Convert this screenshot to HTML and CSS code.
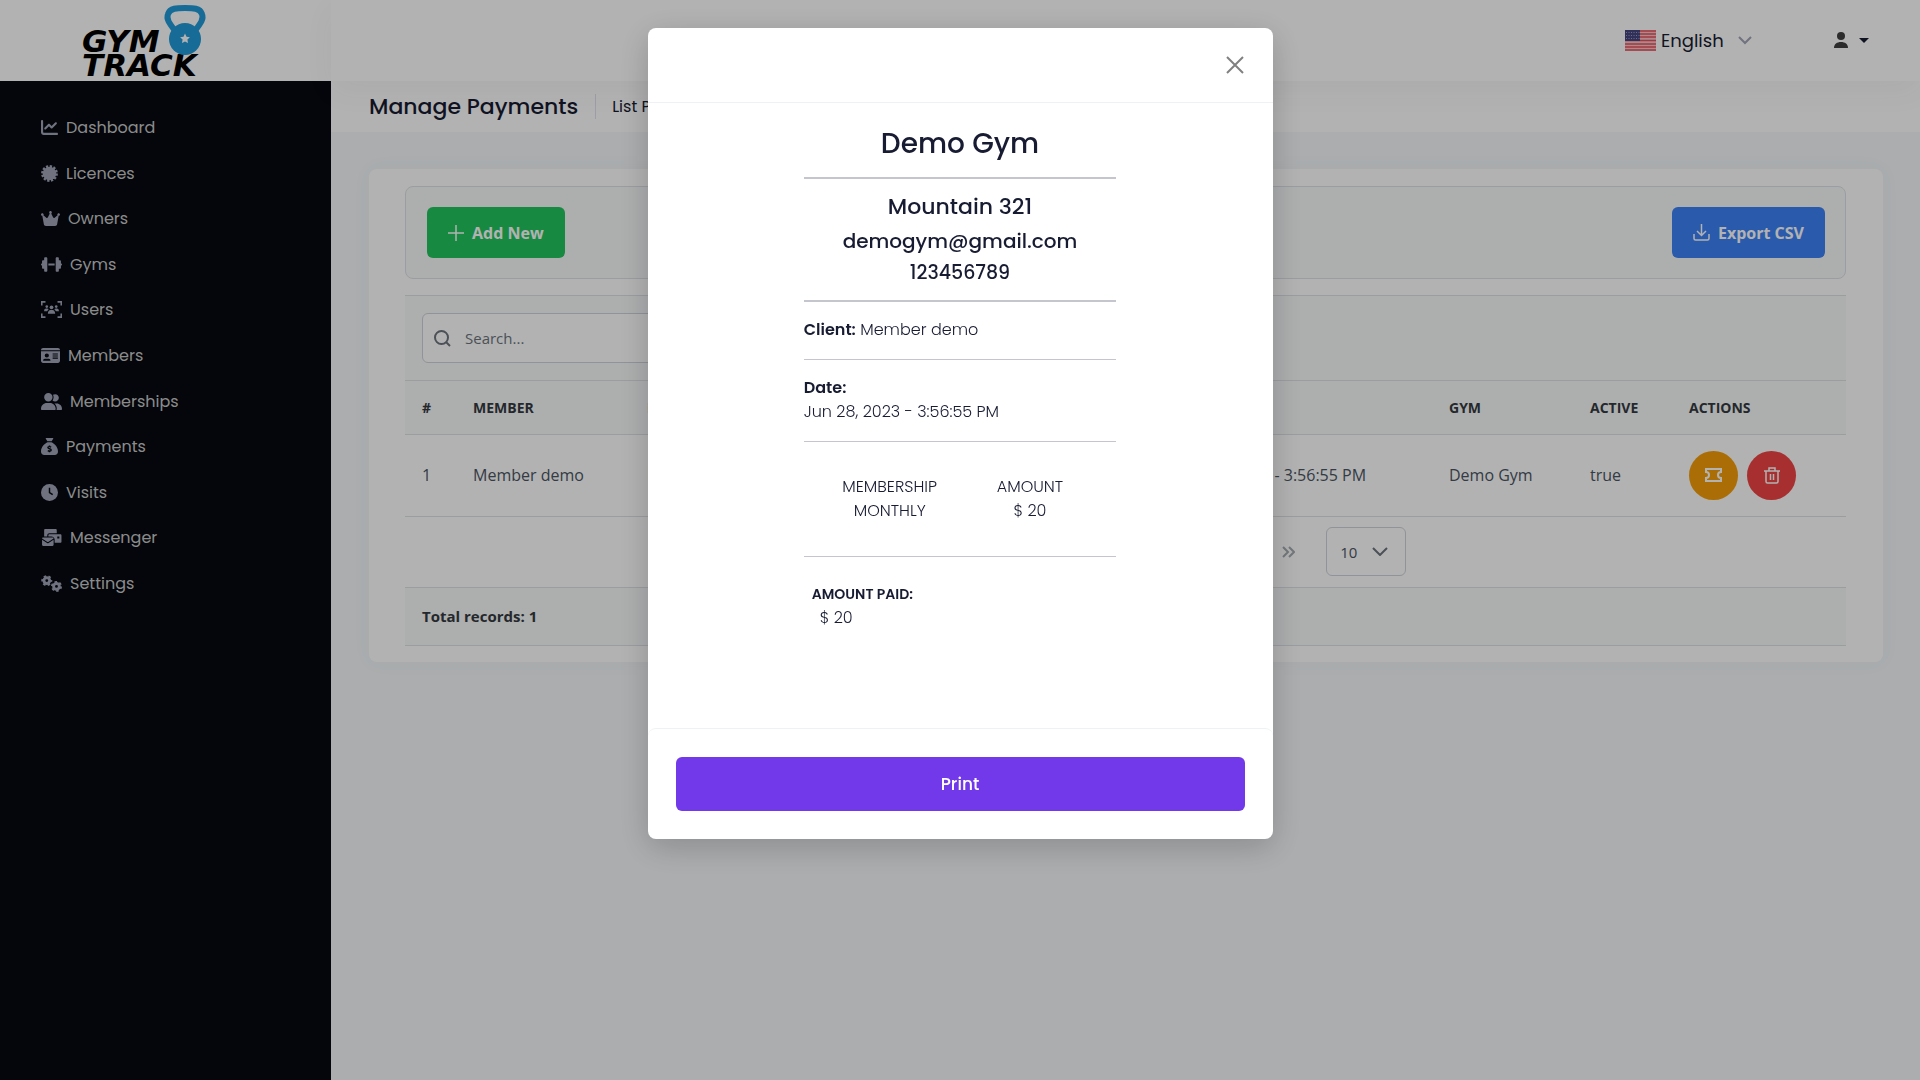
FILE: index.html
```html
<!DOCTYPE html>
<html lang="en">
<head>
    <meta charset="UTF-8">
    <meta name="viewport" content="width=device-width, initial-scale=1.0">
    <title>Manage Payments</title>
    <link rel="stylesheet" href="styles.css">
</head>
<body>
    <div class="app">
        <aside class="sidebar">
            <a class="logo" href="#" aria-label="Gym Track">
                <svg width="130" height="88" viewBox="0 0 130 88">
                    <text class="logo-text"><tspan x="4" y="52">GYM</tspan><tspan x="4" y="76">TRACK</tspan></text>
                    <path d="M98 32C91 23 88 19 90 14C92 8 99 8 107 8C115 8 122 8 124 14C126 19 123 23 116 32" fill="none" stroke="#209bd9" stroke-width="6"/>
                    <circle cx="107" cy="39" r="16" fill="#209bd9"/>
                    <path d="M107 33.500l1.500 3.200 3.400.5-2.500 2.400.6 3.500-3-1.700-3 1.700.6-3.500-2.500-2.400 3.400-.5z" fill="#fff"/>
                </svg>
            </a>
            <nav>
                <ul class="menu">
                    <li><a href="#"><svg class="w-17" viewBox="0 0 512 512"><path d="M64 64c0-17.700-14.300-32-32-32S0 46.300 0 64V400c0 44.200 35.800 80 80 80H480c17.700 0 32-14.300 32-32s-14.300-32-32-32H80c-8.800 0-16-7.200-16-16V64zm406.600 86.600c12.500-12.500 12.500-32.800 0-45.300s-32.800-12.500-45.300 0L320 210.700l-57.400-57.400c-12.500-12.500-32.800-12.500-45.300 0l-112 112c-12.500 12.500-12.500 32.800 0 45.300s32.800 12.500 45.300 0L240 221.300l57.400 57.400c12.500 12.500 32.800 12.500 45.300 0l128-128z"/></svg>Dashboard</a></li>
                    <li><a href="#"><svg class="w-17" viewBox="0 0 512 512"><circle cx="256" cy="256" r="205"/><circle cx="256" cy="256" r="215" fill="none" stroke="currentColor" stroke-width="76" stroke-dasharray="68 44.600"/></svg>Licences</a></li>
                    <li><a href="#"><svg class="w-19" viewBox="0 0 576 512"><path d="M309 106c11.400-7 19-19.700 19-34c0-22.100-17.900-40-40-40s-40 17.900-40 40c0 14.400 7.600 27 19 34L209.700 220.600c-9.100 18.200-32.700 23.400-48.600 10.700L72 160c5-6.700 8-15 8-24c0-22.100-17.900-40-40-40S0 113.900 0 136s17.900 40 40 40L86.400 427.400c5.500 30.400 32 52.600 63 52.600H426.600c30.900 0 57.400-22.100 63-52.600L535.300 176c22.100 0 40-17.900 40-40s-17.900-40-40-40s-40 17.900-40 40c0 9 3 17.300 8 24l-89.100 71.300c-15.900 12.700-39.500 7.500-48.600-10.700L309 106z"/></svg>Owners</a></li>
                    <li><a href="#"><svg class="w-21" viewBox="0 0 640 512"><path d="M96 64c0-17.700 14.300-32 32-32h32c17.700 0 32 14.300 32 32V448c0 17.700-14.300 32-32 32H128c-17.700 0-32-14.300-32-32V384H64c-17.700 0-32-14.300-32-32V288c-17.700 0-32-14.300-32-32s14.300-32 32-32V160c0-17.700 14.300-32 32-32H96V64zm448 0v64h32c17.700 0 32 14.300 32 32v64c17.700 0 32 14.300 32 32s-14.300 32-32 32v64c0 17.700-14.300 32-32 32H544v64c0 17.700-14.300 32-32 32H480c-17.700 0-32-14.300-32-32V64c0-17.700 14.300-32 32-32h32c17.700 0 32 14.300 32 32zM416 224v64H224V224H416z"/></svg>Gyms</a></li>
                    <li><a href="#"><svg class="w-21" viewBox="0 0 640 512"><path d="M24 136V24H136M504 24H616V136M616 376V488H504M136 488H24V376" fill="none" stroke="currentColor" stroke-width="48"/><circle cx="320" cy="190" r="56"/><circle cx="176" cy="168" r="40"/><circle cx="464" cy="168" r="40"/><path d="M208 384c0-60 40-112 80-112h64c40 0 80 52 80 112zM96 292c0-40 30-68 60-68h30c20 0 36 8 46 24l-48 60H96zM544 292c0-40-30-68-60-68h-30c-20 0-36 8-46 24l48 60h88z"/></svg>Users</a></li>
                    <li><a href="#"><svg class="w-19" viewBox="0 0 576 512"><path fill-rule="evenodd" d="M0 96l576 0c0-35.300-28.700-64-64-64H64C28.700 32 0 60.700 0 96zm0 32V416c0 35.300 28.700 64 64 64H512c35.300 0 64-28.700 64-64V128H0zM64 405.300c0-29.500 23.900-53.300 53.300-53.300H234.700c29.500 0 53.300 23.900 53.300 53.300c0 5.900-4.800 10.700-10.700 10.700H74.700c-5.900 0-10.700-4.800-10.700-10.700zM176 192a64 64 0 1 1 0 128 64 64 0 1 1 0-128zM352 192H512v32H352zM352 256H512v32H352zM352 320H512v32H352z"/></svg>Members</a></li>
                    <li><a href="#"><svg class="w-21" viewBox="0 0 640 512"><path d="M96 128a128 128 0 1 1 256 0A128 128 0 1 1 96 128zM0 482.300C0 383.800 79.800 304 178.300 304h91.400C368.200 304 448 383.800 448 482.300c0 16.400-13.300 29.700-29.700 29.700H29.700C13.300 512 0 498.700 0 482.300zM609.300 512H471.400c5.400-9.400 8.600-20.300 8.600-32v-8c0-60.700-27.100-115.200-69.800-151.800c2.400-.1 4.700-.2 7.100-.2h61.400C567.800 320 640 392.200 640 481.300c0 17-13.800 30.700-30.700 30.700zM432 256c-31 0-59-12.600-79.300-32.900C372.400 196.500 384 163.600 384 128c0-26.800-6.600-52.100-18.300-74.300C384.300 40.100 407.200 32 432 32c61.900 0 112 50.100 112 112s-50.100 112-112 112z"/></svg>Memberships</a></li>
                    <li><a href="#"><svg class="w-17" viewBox="0 0 512 512"><path d="M320 96H192L144.600 24.900C137.500 14.200 145.100 0 157.900 0H354.100c12.800 0 20.400 14.200 13.300 24.900L320 96zM192 128H320c3.800 2.500 8.100 5.300 13 8.400C389.700 172.700 512 250.900 512 416c0 53-43 96-96 96H96c-53 0-96-43-96-96C0 250.900 122.300 172.700 179 136.400c4.800-3.100 9.200-5.900 13-8.400z"/><path class="cut" d="M306 272c-40-20-96-18-98 18c-2 42 98 26 98 72c0 38-60 38-102 16M256 224v40M256 388v40"/></svg>Payments</a></li>
                    <li><a href="#"><svg class="w-17" viewBox="0 0 512 512"><circle cx="256" cy="256" r="256"/><path class="cut" d="M256 110V256L352 320"/></svg>Visits</a></li>
                    <li><a href="#"><svg class="w-21" viewBox="0 0 640 512"><path fill-rule="evenodd" d="M96 32c0-18 14-32 32-32H448c18 0 32 14 32 32V128H256c-35 0-64 29-64 64v32H96zM256 160H592c18 0 32 14 32 32V384c0 18-14 32-32 32H416V320c0-53-43-96-96-96H224V192c0-18 14-32 32-32zM496 224v64h64V224zM32 288c0-18 14-32 32-32H352c18 0 32 14 32 32L220 392c-8 5-16 5-24 0zM32 328L184 424c16 10 32 10 48 0L384 328V480c0 18-14 32-32 32H64c-18 0-32-14-32-32z"/></svg>Messenger</a></li>
                    <li><a href="#"><svg class="w-21" viewBox="0 0 640 512"><g fill="none" stroke="currentColor"><circle cx="176" cy="168" r="88" stroke-width="88"/><circle cx="176" cy="168" r="140" stroke-width="56" stroke-dasharray="74 72.600" stroke-dashoffset="37"/><circle cx="472" cy="344" r="88" stroke-width="88"/><circle cx="472" cy="344" r="140" stroke-width="56" stroke-dasharray="74 72.600"/></g></svg>Settings</a></li>
                </ul>
            </nav>
        </aside>

        <div class="main">
            <header class="topbar">
                <div class="language">
                    <svg width="31" height="21" viewBox="0 0 31 21">
                        <rect width="31" height="21" fill="#f5c6cb"/>
                        <path d="M0 1H31M0 4H31M0 7H31M0 10.500H31M0 14H31M0 17H31M0 20H31" stroke="#e8505b" stroke-width="1.500"/>
                        <rect width="15" height="11" fill="#46467f"/>
                        <path d="M1 2.500H15M1 5.500H15M1 8.500H15" stroke="#9a9ac4" stroke-dasharray="1 1.500"/>
                    </svg>
                    <select aria-label="Language">
                        <option>English</option>
                    </select>
                    <svg class="chevron" width="14" height="9" viewBox="0 0 14 9"><path d="M1 1L7 7L13 1" fill="none" stroke="#a1a5b7" stroke-width="2"/></svg>
                </div>
                <button class="user-menu" type="button" aria-label="Account">
                    <svg width="14" height="17" viewBox="0 0 14 17"><circle cx="7" cy="4" r="4"/><path d="M0 16C0 12 3 10 7 10S14 12 14 16Z"/></svg>
                    <svg width="10" height="5" viewBox="0 0 10 5"><path d="M0 0H10L5 5Z" fill="#181c32"/></svg>
                </button>
            </header>

            <div class="page-title">
                <h1>Manage Payments</h1>
                <span>List Payments</span>
            </div>

            <main class="card">
                <div class="toolbar">
                    <button class="btn btn-green" type="button">
                        <svg width="16" height="16" viewBox="0 0 16 16"><path stroke-width="1.500" d="M8 0V16M0 8H16"/></svg>
                        Add New
                    </button>
                    <button class="btn btn-blue" type="button">
                        <svg width="17" height="17" viewBox="0 0 17 17"><path stroke-width="1.500" d="M8.500 0V11M4 7L8.500 11.500L13 7M1 10V14.500Q1 16 2.500 16H14.500Q16 16 16 14.500V10"/></svg>
                        Export CSV
                    </button>
                </div>

                <div class="table-header">
                    <div class="search">
                        <svg width="17" height="17" viewBox="0 0 17 17"><circle cx="7.500" cy="7.500" r="6.500"/><path d="M12 12L16 16"/></svg>
                        <input type="text" placeholder="Search..." aria-label="Search">
                    </div>
                </div>
                <table>
                    <thead>
                        <tr>
                            <th class="col-id">#</th>
                            <th class="col-member">Member</th>
                            <th>Membership</th>
                            <th class="col-date">Date</th>
                            <th class="col-gym">Gym</th>
                            <th class="col-active">Active</th>
                            <th class="col-actions">Actions</th>
                        </tr>
                    </thead>
                    <tbody>
                        <tr>
                            <td>1</td>
                            <td>Member demo</td>
                            <td>Monthly</td>
                            <td>Jun 28, 2023 - 3:56:55 PM</td>
                            <td>Demo Gym</td>
                            <td>true</td>
                            <td>
                                <div class="actions">
                                    <button class="round orange" type="button" aria-label="Ticket">
                                        <svg width="17" height="14" viewBox="0 0 17 14"><path stroke-width="2" d="M1 1H16V4Q13 4 13 7T16 10V13H1V10Q4 10 4 7T1 4Z"/></svg>
                                    </button>
                                    <button class="round red" type="button" aria-label="Delete">
                                        <svg width="16" height="17" viewBox="0 0 16 17"><path stroke-width="1.500" d="M0 4H16M2 4V14.500Q2 16 3.500 16H12.500Q14 16 14 14.500V4M5 4V1H11V4M6.500 7V13M9.500 7V13"/></svg>
                                    </button>
                                </div>
                            </td>
                        </tr>
                    </tbody>
                </table>
                <div class="paginator">
                    <span>Showing 1 to 1 of 1 entries</span>
                    <div class="pages">
                        <button type="button">«</button>
                        <button type="button">‹</button>
                        <button type="button">1</button>
                        <button type="button">›</button>
                        <button type="button" aria-label="Last page"><svg width="13" height="12" viewBox="0 0 13 12"><path d="M1 1L6 6L1 11M7 1L12 6L7 11"/></svg></button>
                    </div>
                    <div class="page-size">
                        <select aria-label="Rows per page">
                            <option>10</option>
                        </select>
                        <svg width="16" height="9" viewBox="0 0 16 9"><path d="M1 1L8 8L15 1"/></svg>
                    </div>
                </div>
                <div class="table-footer">Total records: 1</div>
            </main>
        </div>
    </div>

    <!-- payment receipt -->
    <div class="backdrop">
        <div class="modal" role="dialog" aria-modal="true" aria-label="Payment receipt">
            <div class="modal-header">
                <button type="button" aria-label="Close">
                    <svg width="18" height="18" viewBox="0 0 18 18"><path d="M1 1L17 17M17 1L1 17"/></svg>
                </button>
            </div>
            <div class="modal-body">
                <div class="receipt">
                    <h2>Demo Gym</h2>
                    <div class="gym-info">
                        <h3>Mountain 321</h3>
                        <h4>demogym@gmail.com</h4>
                        <h5>123456789</h5>
                    </div>
                    <p><b>Client:</b> Member demo</p>
                    <p><b>Date:</b><br>Jun 28, 2023 - 3:56:55 PM</p>
                    <table class="items">
                        <tr><th>MEMBERSHIP</th><th>AMOUNT</th></tr>
                        <tr><td>MONTHLY</td><td>$ 20</td></tr>
                    </table>
                    <div class="paid">
                        <h6>AMOUNT PAID:</h6>
                        <span>$ 20</span>
                    </div>
                </div>
            </div>
            <div class="modal-footer">
                <button class="print" type="button">Print</button>
            </div>
        </div>
    </div>
</body>
</html>
```

FILE: styles.css
```css
* {
    box-sizing: border-box;
}
body {
    margin: 0;
    background-color: #f5f8fa;
    color: #181c32;
    font-family: Poppins, Inter, sans-serif;
    font-size: 16px;
}
h1, h2, h3, h4, h5, h6, p, ul {
    margin: 0;
    padding: 0;
    font-weight: 500;
}
button, select, input {
    font: inherit;
    color: inherit;
}
button {
    border: none;
    background: none;
    padding: 0;
    cursor: pointer;
}
select {
    appearance: none;
    border: none;
    background: none;
    padding: 0;
}
.app {
    display: flex;
    min-height: 100vh;
}

/* sidebar */
.sidebar {
    width: 331px;
    flex-shrink: 0;
    background-color: #060910;
}
.logo {
    display: block;
    height: 81px;
    padding-left: 78px;
    background-color: #fff;
}
.logo-text {
    font: italic bold 31px "DejaVu Sans", sans-serif;
    fill: #000;
}
.menu {
    display: grid;
    grid-auto-rows: 1fr;
    height: 501px;
    margin-top: 24px;
    padding-left: 41px;
    list-style: none;
}
.menu li {
    display: flex;
}
.menu a {
    display: flex;
    align-items: center;
    gap: 8px;
    color: #c8c8c8;
    font-size: 16px;
    font-weight: 400;
    text-decoration: none;
}
.menu svg {
    height: 17px;
    fill: currentColor;
    color: #a1a5b7;
}
.menu .w-17 {
    width: 17px;
}
.menu .w-19 {
    width: 19px;
}
.menu .w-21 {
    width: 21px;
}
.menu .cut {
    fill: none;
    stroke: #060910;
    stroke-width: 44px;
}

/* top bar */
.main {
    flex: 1;
    min-width: 0;
}
.topbar {
    position: relative;
    display: flex;
    align-items: center;
    justify-content: flex-end;
    gap: 82px;
    height: 81px;
    padding-right: 51px;
    background-color: #fff;
    box-shadow: 0 10px 30px rgba(82, 63, 105, 0.05);
}
.language {
    display: flex;
    align-items: center;
    gap: 5px;
}
.language select {
    width: 72px;
    font-size: 18px;
}
.user-menu {
    display: flex;
    align-items: center;
    gap: 11px;
    fill: #3f3f3f;
}
.page-title {
    display: flex;
    align-items: center;
    height: 51px;
    padding-left: 38px;
    background-color: #fff;
}
.page-title h1 {
    padding-right: 17px;
    border-right: 1px solid #e1e3ea;
    font-size: 22px;
    line-height: 25px;
}
.page-title span {
    padding-left: 16px;
    font-size: 16px;
}

/* payments list */
.card {
    margin: 37px 37px 37px 38px;
    padding: 17px 37px 16px 36px;
    border-radius: 8px;
    background-color: #fff;
    box-shadow: 0 0 20px rgba(76, 87, 125, 0.04);
    color: #4b5563;
    font-family: "Segoe UI", "Open Sans", sans-serif;
}
.toolbar {
    display: flex;
    justify-content: space-between;
    margin-bottom: 16px;
    padding: 20px 20px 20px 21px;
    border: 1px solid #dee2e6;
    border-radius: 8px;
    background-color: #f8f9fa;
}
.btn {
    display: flex;
    align-items: center;
    gap: 8px;
    height: 51px;
    padding: 0 21px;
    border-radius: 6px;
    color: #fff;
    font-weight: 700;
}
.btn-green {
    background-color: #22c55e;
}
.btn-blue {
    background-color: #3b82f6;
}
.btn svg, .round svg {
    fill: none;
    stroke: #fff;
}
.table-header {
    padding: 17px;
    border: solid #dee2e6;
    border-width: 1px 0;
    background-color: #f8f9fa;
}
.search {
    display: flex;
    align-items: center;
    gap: 12px;
    width: 290px;
    height: 50px;
    padding: 0 11px;
    border: 1px solid #ced4da;
    border-radius: 6px;
    background-color: #fff;
}
.search svg {
    fill: none;
    stroke: #6c757d;
    stroke-width: 2px;
}
.search input {
    min-width: 0;
    border: none;
    background: none;
    font-size: 15px;
}
.search input::placeholder {
    color: #6c757d;
}
table {
    width: 100%;
    border-collapse: collapse;
}
.card table {
    table-layout: fixed;
}
.card th, .card td {
    padding: 0 17px;
    border-bottom: 1px solid #dee2e6;
    text-align: left;
    white-space: nowrap;
}
.card th {
    height: 53px;
    background-color: #f8f9fa;
    color: #343a40;
    font-size: 14px;
    text-transform: uppercase;
}
.card td {
    height: 82px;
}
.col-id {
    width: 51px;
}
.col-member {
    width: 174px;
}
.col-date {
    width: 270px;
}
.col-gym {
    width: 141px;
}
.col-active {
    width: 99px;
}
.col-actions {
    width: 174px;
}
.actions {
    display: flex;
    gap: 9px;
}
.round {
    display: flex;
    align-items: center;
    justify-content: center;
    width: 49px;
    height: 49px;
    border-radius: 50%;
}
.orange {
    background-color: #f59e0b;
}
.red {
    background-color: #ef4444;
}
.paginator {
    display: flex;
    align-items: center;
    justify-content: center;
    gap: 14px;
    height: 70px;
}
.pages {
    display: flex;
    gap: 4px;
}
.pages button {
    width: 48px;
    height: 46px;
}
.pages svg, .page-size svg {
    fill: none;
    stroke: #6c757d;
    stroke-width: 2px;
}
.pages svg {
    opacity: 0.6;
}
.page-size {
    display: flex;
    align-items: center;
    width: 80px;
    height: 49px;
    padding: 0 17px 0 13px;
    border: 1px solid #ced4da;
    border-radius: 6px;
}
.page-size select {
    flex: 1;
    min-width: 0;
    font-size: 15px;
}
.table-footer {
    padding: 16px 17px;
    border: solid #dee2e6;
    border-width: 1px 0;
    background-color: #f8f9fa;
    color: #343a40;
    font-size: 15px;
    font-weight: 700;
    line-height: 25px;
}

/* receipt modal */
.backdrop {
    position: fixed;
    inset: 0;
    display: flex;
    align-items: flex-start;
    justify-content: center;
    padding-top: 28px;
    background-color: rgba(0, 0, 0, 0.3);
}
.modal {
    width: 625px;
    border-radius: 8px;
    background-color: #fff;
    box-shadow: 0 8px 32px rgba(0, 0, 0, 0.2);
}
.modal-header {
    display: flex;
    align-items: center;
    justify-content: flex-end;
    height: 75px;
    padding: 0 29px;
    border-bottom: 1px solid #eff2f5;
}
.modal-header svg {
    display: block;
    stroke: #808080;
    stroke-width: 2px;
}
.modal-body {
    height: 625px;
    padding: 16px 0;
}
.receipt {
    width: 50%;
    margin: 0 auto;
    line-height: 24px;
}
.receipt h2 {
    padding-bottom: 8px;
    border-bottom: 2px solid #c5c5cd;
    font-size: 28px;
    line-height: 50px;
    text-align: center;
}
.gym-info {
    padding: 10px 0 12px;
    border-bottom: 2px solid #c5c5cd;
    text-align: center;
}
.gym-info h3 {
    font-size: 22px;
    line-height: 36px;
}
.gym-info h4 {
    font-size: 20px;
    line-height: 33px;
}
.gym-info h5 {
    font-size: 19px;
    line-height: 30px;
}
.receipt p {
    padding: 16px 0 17px;
    border-bottom: 1px solid #c5c5cd;
    font-weight: 300;
}
.receipt p b {
    font-weight: 600;
}
.items {
    border-bottom: 1px solid #c5c5cd;
    font-weight: 300;
    text-align: center;
}
.items th, .items td {
    padding: 0;
    font-weight: 300;
}
.items th {
    padding-top: 33px;
}
.items td {
    padding-bottom: 33px;
}
.items th:first-child {
    width: 55%;
}
.items th:last-child, .items td:last-child {
    padding-right: 32px;
}
.paid {
    padding: 25px 8px;
    font-weight: 300;
}
.paid h6 {
    font-size: 14px;
    font-weight: 600;
}
.paid span {
    padding-left: 8px;
}
.modal-footer {
    padding: 28px;
    border-top: 1px solid #eff2f5;
    border-radius: 8px;
}
.print {
    width: 100%;
    height: 54px;
    border-radius: 6px;
    background-color: #7239ea;
    color: #fff;
    font-size: 17px;
    font-weight: 500;
}
```
